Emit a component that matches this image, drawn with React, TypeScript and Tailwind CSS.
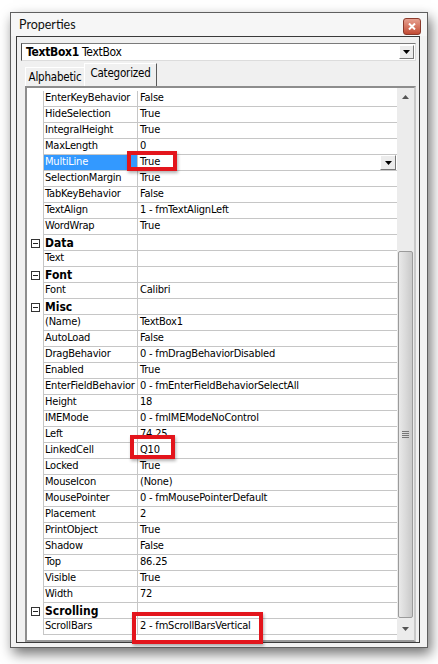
type Row = { n: string; v?: string; cat?: boolean; sel?: boolean };

const rows: Row[] = [
  { n: "EnterKeyBehavior", v: "False" },
  { n: "HideSelection", v: "True" },
  { n: "IntegralHeight", v: "True" },
  { n: "MaxLength", v: "0" },
  { n: "MultiLine", v: "True", sel: true },
  { n: "SelectionMargin", v: "True" },
  { n: "TabKeyBehavior", v: "False" },
  { n: "TextAlign", v: "1 - fmTextAlignLeft" },
  { n: "WordWrap", v: "True" },
  { n: "Data", cat: true },
  { n: "Text", v: "" },
  { n: "Font", cat: true },
  { n: "Font", v: "Calibri" },
  { n: "Misc", cat: true },
  { n: "(Name)", v: "TextBox1" },
  { n: "AutoLoad", v: "False" },
  { n: "DragBehavior", v: "0 - fmDragBehaviorDisabled" },
  { n: "Enabled", v: "True" },
  { n: "EnterFieldBehavior", v: "0 - fmEnterFieldBehaviorSelectAll" },
  { n: "Height", v: "18" },
  { n: "IMEMode", v: "0 - fmIMEModeNoControl" },
  { n: "Left", v: "74.25" },
  { n: "LinkedCell", v: "Q10" },
  { n: "Locked", v: "True" },
  { n: "MouseIcon", v: "(None)" },
  { n: "MousePointer", v: "0 - fmMousePointerDefault" },
  { n: "Placement", v: "2" },
  { n: "PrintObject", v: "True" },
  { n: "Shadow", v: "False" },
  { n: "Top", v: "86.25" },
  { n: "Visible", v: "True" },
  { n: "Width", v: "72" },
  { n: "Scrolling", cat: true },
  { n: "ScrollBars", v: "2 - fmScrollBarsVertical" },
];

function DownArrow() {
  return (
    <svg width="7" height="4" viewBox="0 0 7 4">
      <path d="M0 0h7L3.5 4z" fill="#000" />
    </svg>
  );
}

function GridRow({ r }: { r: Row }) {
  return (
    <div className="flex h-[16px]">
      <div className="w-[16px] shrink-0 flex items-center pl-[4px]">
        {r.cat && (
          <div className="w-[9px] h-[9px] border border-[#333] flex items-center justify-center bg-white">
            <div className="w-[5px] h-px bg-[#222]" />
          </div>
        )}
      </div>
      <div
        className={`w-[94px] shrink-0 border-l border-b border-[#c6c6c6] pl-[1px] flex items-center whitespace-nowrap overflow-hidden ${
          r.sel ? "bg-[#3399ff] text-white" : ""
        } ${r.cat ? "font-bold text-[12px] tracking-normal" : ""}`}
      >
        {r.n}
      </div>
      <div className="flex-1 border-l border-b border-[#c6c6c6] pl-[2px] flex items-center whitespace-nowrap overflow-hidden">
        <span>{r.v}</span>
        {r.sel && (
          <div className="ml-auto mr-px w-[16px] h-[15px] bg-[#ececec] border border-t-white border-l-white border-r-[#777] border-b-[#777] flex items-center justify-center">
            <DownArrow />
          </div>
        )}
      </div>
    </div>
  );
}

export default function App() {
  return (
    <div className="relative w-[438px] h-[664px] bg-white pt-[12px] pl-[10px] overflow-hidden font-['DejaVu_Sans_Condensed','DejaVu_Sans',sans-serif] text-[11px] tracking-[-0.2px] text-black">
      {/* window */}
      <div className="w-[418px] h-[636px] border border-[#5f5f5f] bg-[#f2f2f2] flex flex-col shadow-[3px_6px_12px_rgba(0,0,0,0.55)]">
        {/* title bar */}
        <div className="h-[23px] flex items-center justify-between pl-[8px] pr-[6px] bg-[#f6f6f6]">
          <span className="font-['Lato',sans-serif] text-[12.5px] tracking-normal text-[#111] mt-[1px]">Properties</span>
          <div className="w-[18px] h-[17px] mt-[3px] rounded-[3px] border border-[#8b3a2b] bg-linear-to-b from-[#e6a090] to-[#c24a33] flex items-center justify-center">
            <svg width="8" height="7" viewBox="0 0 8 7">
              <path d="M1 0.5l6 6M7 0.5l-6 6" stroke="#fff" strokeWidth="2" />
            </svg>
          </div>
        </div>

        {/* inner panel */}
        <div className="ml-[5px] w-[404px] h-[607px] border border-[#3a3a3a] bg-[#f0f0f0] flex flex-col">
          {/* object combo */}
          <div className="mt-[6px] ml-[4px] w-[395px] h-[18px] bg-white border border-t-[#7a7a7a] border-l-[#4a4a4a] border-r-[#dcdcdc] border-b-[#dcdcdc] flex items-center">
            <span className="pl-[4px] text-[12px] tracking-[-0.3px]">
              <b>TextBox1</b> TextBox
            </span>
            <div className="ml-auto mr-[1px] w-[15px] h-[14px] bg-[#ececec] border border-t-white border-l-white border-r-[#777] border-b-[#777] flex items-center justify-center">
              <DownArrow />
            </div>
          </div>

          {/* tabs */}
          <div className="mt-[2px] h-[23px] pl-[8px] flex items-end text-[11.5px]">
            <div className="w-[59px] h-[19px] border-t border-l border-white flex items-center justify-center pt-[2px]">
              Alphabetic
            </div>
            <div className="w-[73px] h-[23px] border-t border-l border-r border-t-white border-l-white border-r-[#5a5a5a] flex items-center justify-center pb-[2px]">
              Categorized
            </div>
          </div>

          {/* property grid */}
          <div className="ml-[8px] w-[391px] h-[556px] border-2 border-t-[#8d8d8d] border-l-[#8d8d8d] border-r-[#c9c9c9] border-b-[#9a9a9a] bg-white flex">
            <div className="flex-1 pt-[3px]">
              {rows.map((r, i) => (
                <GridRow key={i} r={r} />
              ))}
            </div>
            {/* scrollbar */}
            <div className="w-[17px] bg-[#ececec] flex flex-col">
              <div className="h-[17px] flex items-center justify-center">
                <svg width="7" height="4" viewBox="0 0 7 4">
                  <path d="M0 4h7L3.5 0z" fill="#555" />
                </svg>
              </div>
              <div className="h-[146px]" />
              <div className="h-[367px] mx-px rounded-[2px] border border-[#9b9b9b] bg-linear-to-r from-[#e9e9e9] via-[#dadada] to-[#c9c9c9] flex items-center justify-center">
                <div className="flex flex-col gap-px">
                  <div className="w-[7px] h-px bg-[#777]" />
                  <div className="w-[7px] h-px bg-[#777]" />
                  <div className="w-[7px] h-px bg-[#777]" />
                  <div className="w-[7px] h-px bg-[#777]" />
                </div>
              </div>
              <div className="flex-1" />
              <div className="h-[17px] mb-[3px] flex items-center justify-center">
                <svg width="7" height="4" viewBox="0 0 7 4">
                  <path d="M0 0h7L3.5 4z" fill="#555" />
                </svg>
              </div>
            </div>
          </div>
        </div>
      </div>

      {/* red annotation boxes */}
      <div className="absolute left-[127px] top-[151px] w-[50px] h-[20px] border-4 border-[#e3151c] shadow-[1px_2px_3px_rgba(0,0,0,0.3)]" />
      <div className="absolute left-[130px] top-[435px] w-[45px] h-[24px] border-4 border-[#e3151c] shadow-[1px_2px_3px_rgba(0,0,0,0.3)]" />
      <div className="absolute left-[132px] top-[612px] w-[131px] h-[32px] border-4 border-[#e3151c] shadow-[1px_2px_3px_rgba(0,0,0,0.3)]" />
    </div>
  );
}
